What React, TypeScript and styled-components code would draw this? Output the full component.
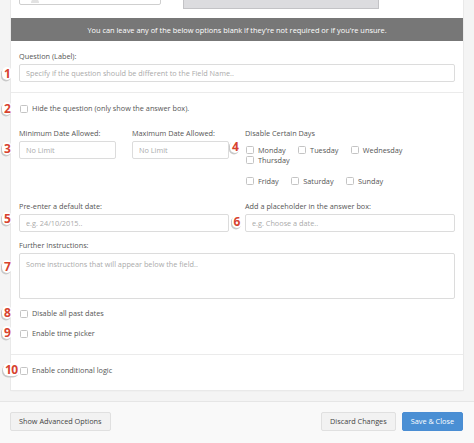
import React from "react";
import styled, { createGlobalStyle } from "styled-components";

const Global = createGlobalStyle`
  html, body { margin: 0; padding: 0; background: #f4f4f4; }
  body {
    font-family: "Open Sans", "Noto Sans", sans-serif;
    font-size: 7.3px;
    color: #555;
    width: 474px;
    height: 443px;
    overflow: hidden;
  }
  * { box-sizing: border-box; }
`;

const Page = styled.div`
  width: 474px;
  height: 443px;
  display: flex;
  flex-direction: column;
  background: #f4f4f4;
`;

const Panel = styled.div`
  margin: 0 11px;
  background: #fff;
  box-shadow: 0 0 0 1px #e9e9e9, 0 1px 2px rgba(0, 0, 0, 0.05);
`;

const TopStrip = styled.div`
  height: 18px;
  padding: 0 8px;
  display: flex;
  overflow: hidden;
`;

const ClippedField = styled.div`
  width: 142px;
  height: 24px;
  margin-top: -19px;
  border: 1px solid #cfcfcf;
  border-radius: 2px;
  background: #fff;
  display: flex;
  align-items: flex-end;
  padding: 0 0 1px 9px;
  position: relative;
`;

const ClippedPreview = styled.div`
  width: 196px;
  height: 30px;
  margin-top: -21px;
  margin-left: 22px;
  background: #dcdcdf;
  border: 1px solid #c3c3c6;
`;

const Banner = styled.div`
  height: 23px;
  background: #777777;
  color: #fff;
  display: flex;
  align-items: center;
  justify-content: center;
  font-size: 7.4px;
`;

const Section = styled.div<{ $pt: number; $pb: number; $last?: boolean }>`
  padding: ${(p) => p.$pt}px 8px ${(p) => p.$pb}px;
  border-bottom: ${(p) => (p.$last ? "none" : "1px solid #ebebeb")};
`;

const Label = styled.div`
  line-height: 11px;
  height: 11px;
  margin-bottom: 2px;
  color: #555;
  white-space: nowrap;
`;

const Field = styled.div<{ $mt?: number }>`
  position: relative;
  margin-top: ${(p) => p.$mt ?? 0}px;
`;

const TextInput = styled.input`
  display: block;
  width: 100%;
  height: 18px;
  border: 1px solid #dcdcdc;
  border-radius: 2px;
  padding: 0 6px;
  font-family: "Open Sans", "Noto Sans", sans-serif;
  font-size: 7.3px;
  color: #555;
  background: #fff;
  outline: none;
  &::placeholder { color: #aaa; }
`;

const TextArea = styled.textarea`
  display: block;
  width: 100%;
  height: 46px;
  border: 1px solid #dcdcdc;
  border-radius: 2px;
  padding: 5px 6px;
  font-family: "Open Sans", "Noto Sans", sans-serif;
  font-size: 7.3px;
  color: #555;
  resize: none;
  outline: none;
  &::placeholder { color: #aaa; }
`;

const CheckRow = styled.div<{ $mt?: number }>`
  position: relative;
  display: flex;
  align-items: center;
  gap: 4px;
  height: 11px;
  line-height: 11px;
  margin-top: ${(p) => p.$mt ?? 0}px;
  white-space: nowrap;
`;

const Box = styled.span`
  display: inline-block;
  flex: none;
  width: 8px;
  height: 8px;
  margin-left: 1px;
  border: 1px solid #c4c4c4;
  border-radius: 1.5px;
  background: #fff;
`;

const TwoCol = styled.div<{ $mt: number }>`
  display: grid;
  grid-template-columns: 1fr 1fr;
  column-gap: 16px;
  margin-top: ${(p) => p.$mt}px;
`;

const Column = styled.div`
  display: flex;
  flex-direction: column;
`;

const DayGroup = styled.div<{ $mt: number }>`
  position: relative;
  display: flex;
  flex-wrap: wrap;
  margin-top: ${(p) => p.$mt}px;
`;

const DayItem = styled.div`
  display: flex;
  align-items: center;
  gap: 4px;
  height: 10.5px;
  line-height: 10.5px;
  margin-right: 11.5px;
  white-space: nowrap;
`;

const Badge = styled.span<{ $left: number; $top: number }>`
  position: absolute;
  left: ${(p) => p.$left}px;
  top: ${(p) => p.$top}px;
  height: 13px;
  padding: 0 2px;
  border-radius: 6px;
  background: #fff;
  box-shadow: -1px 1.5px 0 #c9c9c9;
  color: #d7432f;
  font-family: "Open Sans", "Noto Sans", sans-serif;
  font-weight: 700;
  font-size: 12px;
  line-height: 13px;
  letter-spacing: -0.5px;
  z-index: 2;
`;

const Gap = styled.div`
  height: 11px;
  flex: none;
`;

const Footer = styled.div`
  flex: 1;
  border-top: 1px solid #e6e6e6;
  background: #f9f9f9;
  display: flex;
  align-items: flex-start;
  padding: 10px 11px 0 10px;
  gap: 6px;
`;

const Button = styled.button<{ $primary?: boolean; $push?: boolean }>`
  height: 19px;
  padding: 0 8px;
  border-radius: 2px;
  border: 1px solid ${(p) => (p.$primary ? "#4a8dd3" : "#e0e0e0")};
  background: ${(p) => (p.$primary ? "#4a8fd4" : "#f2f2f2")};
  color: ${(p) => (p.$primary ? "#fff" : "#444")};
  font-family: "Open Sans", "Noto Sans", sans-serif;
  font-size: 7.3px;
  line-height: 17px;
  white-space: nowrap;
  margin-left: ${(p) => (p.$push ? "auto" : "0")};
  cursor: pointer;
`;

const Day = ({ name }: { name: string }) => (
  <DayItem>
    <Box />
    <span>{name}</span>
  </DayItem>
);

export default function App() {
  return (
    <>
      <Global />
      <Page>
        <Panel>
          <TopStrip>
            <ClippedField>
              <svg width="12" height="8" viewBox="0 0 12 8">
                <path d="M2 8 C2 5 4 3.5 6 3.5 C8 3.5 10 5 10 8" fill="#e2e2e2" />
              </svg>
            </ClippedField>
            <ClippedPreview />
          </TopStrip>
          <Banner>You can leave any of the below options blank if they're not required or if you're unsure.</Banner>

          <Section $pt={10} $pb={10}>
            <Label>Question (Label):</Label>
            <Field>
              <Badge $left={-17} $top={2.5}>1</Badge>
              <TextInput placeholder="Specify if the question should be different to the Field Name.." />
            </Field>
          </Section>

          <Section $pt={10} $pb={15}>
            <CheckRow>
              <Badge $left={-17} $top={-1.5}>2</Badge>
              <Box />
              <span>Hide the question (only show the answer box).</span>
            </CheckRow>

            <TwoCol $mt={13.5}>
              <TwoCol $mt={0}>
                <Column>
                  <Label>Minimum Date Allowed:</Label>
                  <Field>
                    <Badge $left={-17} $top={1.5}>3</Badge>
                    <TextInput placeholder="No Limit" />
                  </Field>
                </Column>
                <Column>
                  <Label>Maximum Date Allowed:</Label>
                  <Field>
                    <TextInput placeholder="No Limit" />
                  </Field>
                </Column>
              </TwoCol>
              <Column>
                <Label>Disable Certain Days</Label>
                <DayGroup $mt={4}>
                  <Badge $left={-15} $top={-4.5}>4</Badge>
                  <Day name="Monday" />
                  <Day name="Tuesday" />
                  <Day name="Wednesday" />
                  <Day name="Thursday" />
                </DayGroup>
                <DayGroup $mt={10.5}>
                  <Day name="Friday" />
                  <Day name="Saturday" />
                  <Day name="Sunday" />
                </DayGroup>
              </Column>
            </TwoCol>

            <TwoCol $mt={14}>
              <Column>
                <Label>Pre-enter a default date:</Label>
                <Field>
                  <Badge $left={-17} $top={-2}>5</Badge>
                  <TextInput placeholder="e.g. 24/10/2015.." />
                </Field>
              </Column>
              <Column>
                <Label>Add a placeholder in the answer box:</Label>
                <Field>
                  <Badge $left={-13.5} $top={1}>6</Badge>
                  <TextInput placeholder="e.g. Choose a date.." />
                </Field>
              </Column>
            </TwoCol>

            <Field $mt={8.5}>
              <Label>Further Instructions:</Label>
              <Field>
                <Badge $left={-17} $top={6.5}>7</Badge>
                <TextArea placeholder="Some instructions that will appear below the field.." />
              </Field>
            </Field>

            <CheckRow $mt={9}>
              <Badge $left={-17} $top={-2.5}>8</Badge>
              <Box />
              <span>Disable all past dates</span>
            </CheckRow>
            <CheckRow $mt={9}>
              <Badge $left={-17} $top={-2.5}>9</Badge>
              <Box />
              <span>Enable time picker</span>
            </CheckRow>
          </Section>

          <Section $pt={10} $pb={14} $last>
            <CheckRow>
              <Badge $left={-16} $top={-2}>10</Badge>
              <Box />
              <span>Enable conditional logic</span>
            </CheckRow>
          </Section>
        </Panel>
        <Gap />
        <Footer>
          <Button>Show Advanced Options</Button>
          <Button $push>Discard Changes</Button>
          <Button $primary>Save &amp; Close</Button>
        </Footer>
      </Page>
    </>
  );
}
